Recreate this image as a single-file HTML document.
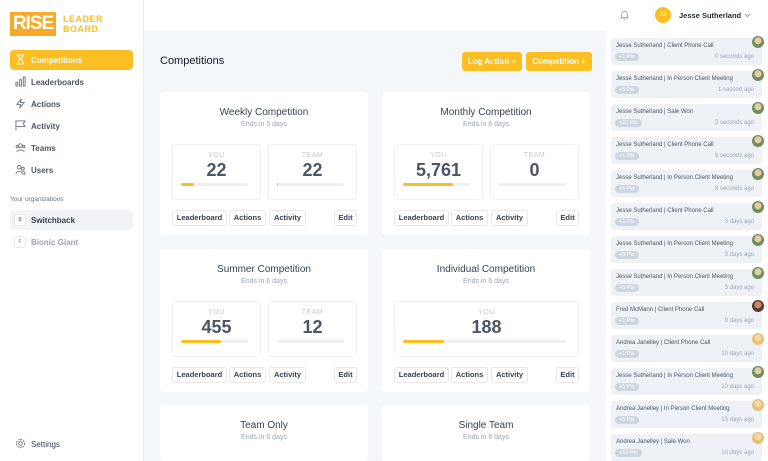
<!DOCTYPE html><html style="width:768px;height:461px;overflow:hidden"><head><style>
*{box-sizing:border-box;margin:0;padding:0}
body{width:768px;height:461px;overflow:hidden;font-family:"Liberation Sans",sans-serif;background:#f4f7fa;position:relative;color:#374151}
.side{position:absolute;left:0;top:0;width:144px;height:461px;background:#fff;border-right:1px solid #e8ebef}
.hdr{position:absolute;left:144px;top:0;right:0;height:31px;background:#fff}
.nav{position:absolute;left:10px;width:123px;height:20px;border-radius:4px;font-size:8px;font-weight:bold;color:#4b5563;display:flex;align-items:center;padding-left:21px}
.nav svg{position:absolute;left:5px;top:4px}
.card{position:absolute;background:#fff;border-radius:4px;width:208px;height:143px;text-align:center}
.card h3{font-size:10px;font-weight:normal;color:#374151;margin-top:15px}
.card .e{font-size:7px;color:#9aa5b8;margin-top:3px}
.box{position:absolute;top:52px;width:89px;height:56px;border:1px solid #eef0f3;border-radius:4px;text-align:center}
.box .l{font-size:7px;color:#c3cad6;margin-top:7px;letter-spacing:.5px}
.box .n{font-size:18px;color:#4b5568;margin-top:1px;font-weight:bold}
.bar{position:absolute;left:8px;right:12px;bottom:13px;height:3px;background:#eef0f3;border-radius:2px}
.bar i{display:block;height:3px;background:#fbbf24;border-radius:2px}
.btn{position:absolute;top:118px;height:16px;border:1px solid #e5e8ec;border-radius:3px;font-size:7.5px;font-weight:bold;color:#374151;line-height:14px;text-align:center;white-space:nowrap}
.b1{left:12px;width:55px}.b2{left:69px;width:37px}.b3{left:109px;width:37px}.b4{left:174px;width:23px}
.fi{position:absolute;left:611px;width:151px;height:27px;background:#eef1f5;border-radius:3px}
.fi .t{position:absolute;left:5px;top:5px;font-size:6px;color:#4b5563}
.fi .p{position:absolute;left:4px;top:15px;background:#cfd6e0;color:#fff;font-size:5.5px;border-radius:5px;padding:1px 4px}
.fi .d{position:absolute;right:8px;top:16px;font-size:6px;color:#9aa5b8}
.av{position:absolute;left:752px;width:12px;height:12px;border-radius:6px;background:radial-gradient(circle at 50% 40%,#e8c9a8 35%,#6b8f5a 40%)}
.yb{position:absolute;top:52px;height:19px;background:#fbbf24;border-radius:3px;color:#fff;font-size:8px;font-weight:bold;line-height:19px;text-align:center}
</style></head><body>
<div class="side">
<div style="position:absolute;left:10px;top:12px;width:46px;height:24px;background:#f7a928;color:#fff;font-weight:bold;font-size:19px;line-height:24px;text-align:center;letter-spacing:-1px">RISE</div>
<div style="position:absolute;left:63px;top:14px;color:#fbbf24;font-weight:bold;font-size:9px;line-height:10px;letter-spacing:.5px">LEADER<br>BOARD</div>
<div class="nav" style="top:50px;background:#fbbf24;color:#fff"><svg width="11" height="11" viewBox="0 0 12 12" fill="none" stroke="#fff"><path d="M2 1h8M2 11h8M3 1c0 4 6 4 6 10M9 1c0 4-6 4-6 10"/></svg>Competitions</div>
<div class="nav" style="top:72px"><svg width="11" height="11" viewBox="0 0 12 12" fill="none" stroke="#6b7280"><path d="M1 11V7h2v4zM5 11V4h2v7zM9 11V1h2v10z"/></svg>Leaderboards</div>
<div class="nav" style="top:94px"><svg width="11" height="11" viewBox="0 0 12 12" fill="none" stroke="#6b7280"><path d="M7 1L2 7h4l-1 4 5-6H6z"/></svg>Actions</div>
<div class="nav" style="top:116px"><svg width="11" height="11" viewBox="0 0 12 12" fill="none" stroke="#6b7280"><path d="M1 11V1h10l-2 3 2 3H1"/></svg>Activity</div>
<div class="nav" style="top:138px"><svg width="11" height="11" viewBox="0 0 12 12" fill="none" stroke="#6b7280"><circle cx="6" cy="4" r="2"/><circle cx="2.5" cy="5" r="1.3"/><circle cx="9.5" cy="5" r="1.3"/><path d="M2 11c0-3 8-3 8 0"/></svg>Teams</div>
<div class="nav" style="top:160px"><svg width="11" height="11" viewBox="0 0 12 12" fill="none" stroke="#6b7280"><circle cx="4.5" cy="3.5" r="2"/><circle cx="8.5" cy="5" r="1.6"/><path d="M1 11c0-4 7-4 7 0M8 11h3c0-3-2-3-3-3"/></svg>Users</div>
<div style="position:absolute;left:10px;top:196px;font-size:6.5px;color:#6b7280">Your organizations</div>
<div class="nav" style="top:210px;background:#f1f3f6;color:#374151"><span style="position:absolute;left:4px;top:4px;width:12px;height:12px;border:1px solid #e5e7eb;border-radius:3px;background:#fff;font-size:5px;line-height:10px;text-align:center;color:#6b7280">S</span>Switchback</div>
<div class="nav" style="top:232px;color:#9ca3af"><span style="position:absolute;left:4px;top:4px;width:12px;height:12px;border:1px solid #e5e7eb;border-radius:3px;background:#fff;font-size:5px;line-height:10px;text-align:center;color:#9ca3af">F</span>Bionic Giant</div>
<div class="nav" style="top:434px;font-weight:normal;color:#374151"><svg width="11" height="11" viewBox="0 0 12 12" fill="none" stroke="#6b7280"><circle cx="6" cy="6" r="2"/><circle cx="6" cy="6" r="4.5" stroke-dasharray="2 1"/></svg>Settings</div>
</div>
<div class="hdr">
<svg style="position:absolute;left:475px;top:9px" width="11" height="12" viewBox="0 0 12 12" fill="none" stroke="#9ca3af"><path d="M3 8V5a3 3 0 0 1 6 0v3l1 1H2zM5 10.5h2"/></svg>
<div style="position:absolute;left:509px;top:7px;width:1px;height:17px;background:#eef0f3"></div>
<div style="position:absolute;left:511px;top:7px;width:16px;height:16px;border-radius:8px;background:#fbbf24;color:#fff;font-size:6px;text-align:center;line-height:16px">JS</div>
<div style="position:absolute;left:535px;top:11px;font-size:7.5px;font-weight:bold;color:#1f2937">Jesse Sutherland</div>
<svg style="position:absolute;left:600px;top:13px" width="7" height="5" viewBox="0 0 7 5" fill="none" stroke="#9ca3af"><path d="M1 1l2.5 2.5L6 1"/></svg>
</div>
<div style="position:absolute;left:160px;top:55px;font-size:11px;color:#111827">Competitions</div>
<div class="yb" style="left:462px;width:60px">Log Action +</div>
<div class="yb" style="left:526px;width:66px">Competition +</div>

<div class="card" style="left:160px;top:92px"><h3>Weekly Competition</h3><div class="e">Ends in 5 days</div>
<div class="box" style="left:12px"><div class="l">YOU</div><div class="n">22</div><div class="bar"><i style="width:20%"></i></div></div>
<div class="box" style="left:108px"><div class="l">TEAM</div><div class="n">22</div><div class="bar"><i style="width:2%"></i></div></div>
<div class="btn b1">Leaderboard</div><div class="btn b2">Actions</div><div class="btn b3">Activity</div><div class="btn b4">Edit</div></div>

<div class="card" style="left:382px;top:92px"><h3>Monthly Competition</h3><div class="e">Ends in 6 days</div>
<div class="box" style="left:12px"><div class="l">YOU</div><div class="n">5,761</div><div class="bar"><i style="width:75%"></i></div></div>
<div class="box" style="left:108px"><div class="l">TEAM</div><div class="n">0</div><div class="bar"></div></div>
<div class="btn b1">Leaderboard</div><div class="btn b2">Actions</div><div class="btn b3">Activity</div><div class="btn b4">Edit</div></div>

<div class="card" style="left:160px;top:249px"><h3>Summer Competition</h3><div class="e">Ends in 6 days</div>
<div class="box" style="left:12px"><div class="l">YOU</div><div class="n">455</div><div class="bar"><i style="width:60%"></i></div></div>
<div class="box" style="left:108px"><div class="l">TEAM</div><div class="n">12</div><div class="bar"></div></div>
<div class="btn b1">Leaderboard</div><div class="btn b2">Actions</div><div class="btn b3">Activity</div><div class="btn b4">Edit</div></div>

<div class="card" style="left:382px;top:249px"><h3>Individual Competition</h3><div class="e">Ends in 6 days</div>
<div class="box" style="left:12px;width:185px"><div class="l">YOU</div><div class="n">188</div><div class="bar"><i style="width:25%"></i></div></div>
<div class="btn b1">Leaderboard</div><div class="btn b2">Actions</div><div class="btn b3">Activity</div><div class="btn b4">Edit</div></div>

<div class="card" style="left:160px;top:405px;height:56px"><h3>Team Only</h3><div class="e">Ends in 6 days</div></div>
<div class="card" style="left:382px;top:405px;height:56px"><h3>Single Team</h3><div class="e">Ends in 6 days</div></div>

<div style="position:absolute;left:606px;top:31px;width:162px;height:430px;background:#fff"></div>
<div class="fi" style="top:38px"><div class="t">Jesse Sutherland | Client Phone Call</div><div class="p">+1 Pts</div><div class="d">0 seconds ago</div></div><div class="av" style="top:36px"></div>
<div class="fi" style="top:71px"><div class="t">Jesse Sutherland | In Person Client Meeting</div><div class="p">+5 Pts</div><div class="d">1 second ago</div></div><div class="av" style="top:69px"></div>
<div class="fi" style="top:104px"><div class="t">Jesse Sutherland | Sale Won</div><div class="p">+10 Pts</div><div class="d">3 seconds ago</div></div><div class="av" style="top:102px"></div>
<div class="fi" style="top:137px"><div class="t">Jesse Sutherland | Client Phone Call</div><div class="p">+1 Pts</div><div class="d">6 seconds ago</div></div><div class="av" style="top:135px"></div>
<div class="fi" style="top:170px"><div class="t">Jesse Sutherland | In Person Client Meeting</div><div class="p">+5 Pts</div><div class="d">8 seconds ago</div></div><div class="av" style="top:168px"></div>
<div class="fi" style="top:203px"><div class="t">Jesse Sutherland | Client Phone Call</div><div class="p">+1 Pts</div><div class="d">3 days ago</div></div><div class="av" style="top:201px"></div>
<div class="fi" style="top:236px"><div class="t">Jesse Sutherland | In Person Client Meeting</div><div class="p">+5 Pts</div><div class="d">3 days ago</div></div><div class="av" style="top:234px"></div>
<div class="fi" style="top:269px"><div class="t">Jesse Sutherland | In Person Client Meeting</div><div class="p">+5 Pts</div><div class="d">3 days ago</div></div><div class="av" style="top:267px"></div>
<div class="fi" style="top:302px"><div class="t">Fred McMann | Client Phone Call</div><div class="p">+1 Pts</div><div class="d">9 days ago</div></div><div class="av" style="top:300px;background:radial-gradient(circle at 50% 40%,#c98a6a 35%,#5a3a2a 40%)"></div>
<div class="fi" style="top:335px"><div class="t">Andrea Janelley | Client Phone Call</div><div class="p">+1 Pts</div><div class="d">10 days ago</div></div><div class="av" style="top:333px;background:radial-gradient(circle at 50% 40%,#f0d8b0 35%,#e8c070 40%)"></div>
<div class="fi" style="top:368px"><div class="t">Jesse Sutherland | In Person Client Meeting</div><div class="p">+5 Pts</div><div class="d">10 days ago</div></div><div class="av" style="top:366px"></div>
<div class="fi" style="top:401px"><div class="t">Andrea Janelley | In Person Client Meeting</div><div class="p">+5 Pts</div><div class="d">10 days ago</div></div><div class="av" style="top:399px;background:radial-gradient(circle at 50% 40%,#f0d8b0 35%,#e8c070 40%)"></div>
<div class="fi" style="top:434px"><div class="t">Andrea Janelley | Sale Won</div><div class="p">+10 Pts</div><div class="d">10 days ago</div></div><div class="av" style="top:432px;background:radial-gradient(circle at 50% 40%,#f0d8b0 35%,#e8c070 40%)"></div>
</body></html>
